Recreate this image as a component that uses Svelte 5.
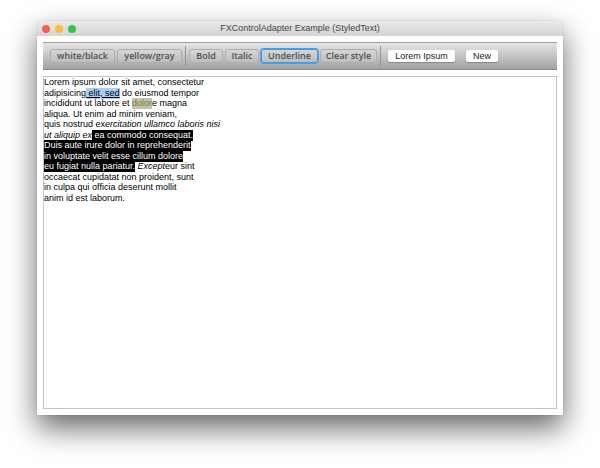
<script>
    const lines = [
        [{ text: "Lorem ipsum dolor sit amet, consectetur" }],
        [
            { text: "adipisicing" },
            { text: " elit, sed", style: "selected underline" },
            { text: " do eiusmod tempor" }
        ],
        [
            { text: "incididunt ut labore et " },
            { text: "dolor", style: "yellow" },
            { text: "e magna" }
        ],
        [{ text: "aliqua. Ut enim ad minim veniam," }],
        [
            { text: "quis nostrud ex" },
            { text: "ercitation ullamco laboris nisi", style: "italic" }
        ],
        [
            { text: "ut aliquip ex", style: "italic" },
            { text: " ea commodo consequat.", style: "black" }
        ],
        [{ text: "Duis aute irure dolor in reprehenderit", style: "black" }],
        [{ text: "in voluptate velit esse cillum dolore", style: "black" }],
        [
            { text: "eu fugiat nulla pariatur.", style: "black" },
            { text: " " },
            { text: "Except", style: "italic" },
            { text: "eur sint" }
        ],
        [{ text: "occaecat cupidatat non proident, sunt" }],
        [{ text: "in culpa qui officia deserunt mollit" }],
        [{ text: "anim id est laborum." }]
    ];

    let focused = $state("Underline");
</script>

{#snippet tool(label, size)}
    <button
        class="tool {size}"
        class:focused={focused === label}
        onclick={() => (focused = label)}>{label}</button
    >
{/snippet}

<main class="window">
    <header class="titlebar">
        <div class="lights">
            <button class="light close" aria-label="Close"></button>
            <button class="light minimize" aria-label="Minimize"></button>
            <button class="light zoom" aria-label="Zoom"></button>
        </div>
        <h1>FXControlAdapter Example (StyledText)</h1>
    </header>

    <div class="content">
        <div class="toolbar" role="toolbar" aria-label="Text style">
            <div class="group">
                {@render tool("white/black", "wide")}
                {@render tool("yellow/gray", "wide")}
            </div>
            <div class="separator"></div>
            <div class="group">
                {@render tool("Bold", "small")}
                {@render tool("Italic", "small")}
                {@render tool("Underline", "medium")}
                {@render tool("Clear style", "medium")}
            </div>
            <div class="separator"></div>
            <div class="natives">
                <button class="native long">Lorem Ipsum</button>
                <button class="native">New</button>
            </div>
        </div>

        <div
            class="editor"
            role="textbox"
            tabindex="0"
            aria-multiline="true"
            aria-label="Styled text"
            contenteditable="true"
            spellcheck="false"
        >
            <div class="lines">
                {#each lines as line}
                    <div class="line">{#each line as run}<span class={run.style}>{run.text}</span>{/each}</div>
                {/each}
            </div>
        </div>
    </div>
</main>

<style>
    :global(body) {
        background: white;
    }

    :global(#app) {
        display: flow-root;
    }

    .window {
        display: flex;
        flex-direction: column;
        box-sizing: border-box;
        margin: 21px 37px 53px;
        min-height: calc(100vh - 74px);
        border-radius: 4px 4px 1px 1px;
        background: white;
        font-family: "Liberation Sans", Arial, sans-serif;
        box-shadow:
            0 0 1px rgba(0, 0, 0, 0.4),
            0 13px 30px rgba(0, 0, 0, 0.6);
    }

    .titlebar {
        display: grid;
        grid-template-columns: 1fr auto 1fr;
        align-items: center;
        height: 15px;
        padding: 0 5px;
        border-radius: 4px 4px 0 0;
        background: linear-gradient(#eaeaea, #d4d4d4);
    }

    .lights {
        display: flex;
        gap: 5px;
    }

    .light {
        width: 8px;
        height: 8px;
        padding: 0;
        border: none;
        border-radius: 50%;
    }

    .close {
        background: #fc5b57;
    }

    .minimize {
        background: #fdbc40;
    }

    .zoom {
        background: #33c748;
    }

    h1 {
        margin: 0;
        font-size: 9px;
        line-height: 15px;
        font-weight: 400;
        color: #444;
    }

    .content {
        flex: 1;
        display: flex;
        flex-direction: column;
        gap: 6px;
        padding: 6px;
    }

    .toolbar {
        display: flex;
        align-items: center;
        gap: 3px;
        box-sizing: border-box;
        height: 28px;
        padding: 0 7px;
        border-top: 1px solid #a0a0a0;
        border-bottom: 1px solid #8e8e8e;
        background: linear-gradient(#e6e6e6, #a2a2a2);
    }

    .group {
        display: flex;
        gap: 2px;
    }

    .tool {
        box-sizing: border-box;
        height: 14px;
        padding: 0;
        border: 1px solid #aeaeae;
        border-radius: 3px;
        background: linear-gradient(#d6d6d6, #bdbdbd);
        font-family: "Open Sans", sans-serif;
        font-size: 9px;
        line-height: 12px;
        font-weight: 600;
        color: #505050;
        white-space: nowrap;
    }

    .wide {
        width: 65px;
    }

    .small {
        width: 34px;
    }

    .medium {
        width: 57px;
    }

    .focused {
        border-color: #3d9be6;
        outline: none;
        box-shadow: 0 0 0 1px #4a9fe0;
    }

    .separator {
        width: 1px;
        height: 20px;
        background: #949494;
    }

    .natives {
        display: flex;
        gap: 11px;
        padding-left: 4px;
    }

    .native {
        width: 32px;
        height: 12px;
        padding: 0;
        border: none;
        border-radius: 2px;
        background: white;
        box-shadow: 0 1px 1px rgba(0, 0, 0, 0.25);
        font-family: inherit;
        font-size: 9px;
        line-height: 12px;
        color: #222;
        white-space: nowrap;
    }

    .long {
        width: 67px;
    }

    .editor {
        flex: 1;
        border: 1px solid #c4c4c4;
        outline: none;
    }

    .lines {
        display: grid;
        grid-template-rows: repeat(12, 1fr);
        height: 126px;
        font-size: 9px;
        line-height: 11px;
        color: black;
        white-space: pre;
    }

    .line {
        min-height: 0;
        height: 10px;
    }

    .line span {
        display: inline-block;
        height: 11px;
    }

    .selected {
        background: #a9cdf5;
    }

    .underline {
        text-decoration: underline;
    }

    .yellow {
        background: #c0c0c0;
        color: #808000;
    }

    .italic {
        font-style: italic;
    }

    .black {
        background: black;
        color: white;
    }
</style>
